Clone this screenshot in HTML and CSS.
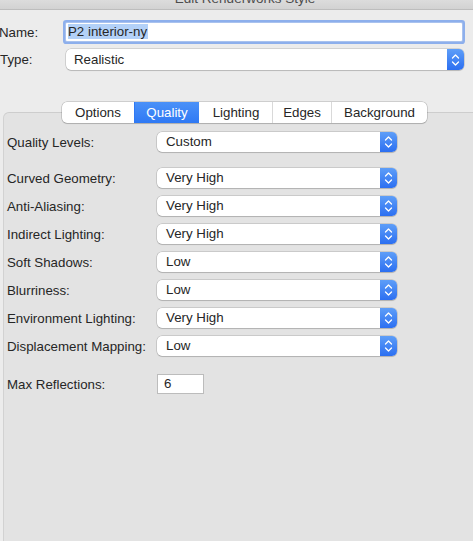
FILE: index.html
```html
<!DOCTYPE html>
<html>
<head>
<meta charset="utf-8">
<link rel="stylesheet" href="styles.css">
</head>
<body>
<div class="titlebar"><span>Edit Renderworks Style</span></div>
<div class="header">
  <label class="lbl name-lbl">Name:</label>
  <div class="textfield focused"><span class="sel">P2 interior-ny</span></div>
  <label class="lbl">Type:</label>
  <div class="popup wide"><span class="val">Realistic</span><span class="stepper"><svg width="17" height="20" viewBox="0 0 17 20"><path d="M5.5 8 L8.5 5 L11.5 8 M5.5 12 L8.5 15 L11.5 12" stroke="#fff" stroke-width="1.3" fill="none" stroke-linecap="round" stroke-linejoin="round"/></svg></span></div>
</div>
<div class="tabarea">
  <div class="tabs">
    <div class="tab t1">Options</div>
    <div class="tab t2 active">Quality</div>
    <div class="tab t3">Lighting</div>
    <div class="tab t4">Edges</div>
    <div class="tab t5">Background</div>
  </div>
  <div class="panel">
    <div class="row first"><span class="lbl">Quality Levels:</span><div class="popup"><span class="val">Custom</span><span class="stepper"><svg width="17" height="20" viewBox="0 0 17 20"><path d="M5.5 8 L8.5 5 L11.5 8 M5.5 12 L8.5 15 L11.5 12" stroke="#fff" stroke-width="1.3" fill="none" stroke-linecap="round" stroke-linejoin="round"/></svg></span></div></div>
    <div class="group">
      <div class="row"><span class="lbl">Curved Geometry:</span><div class="popup"><span class="val">Very High</span><span class="stepper"><svg width="17" height="20" viewBox="0 0 17 20"><path d="M5.5 8 L8.5 5 L11.5 8 M5.5 12 L8.5 15 L11.5 12" stroke="#fff" stroke-width="1.3" fill="none" stroke-linecap="round" stroke-linejoin="round"/></svg></span></div></div>
      <div class="row"><span class="lbl">Anti-Aliasing:</span><div class="popup"><span class="val">Very High</span><span class="stepper"><svg width="17" height="20" viewBox="0 0 17 20"><path d="M5.5 8 L8.5 5 L11.5 8 M5.5 12 L8.5 15 L11.5 12" stroke="#fff" stroke-width="1.3" fill="none" stroke-linecap="round" stroke-linejoin="round"/></svg></span></div></div>
      <div class="row"><span class="lbl">Indirect Lighting:</span><div class="popup"><span class="val">Very High</span><span class="stepper"><svg width="17" height="20" viewBox="0 0 17 20"><path d="M5.5 8 L8.5 5 L11.5 8 M5.5 12 L8.5 15 L11.5 12" stroke="#fff" stroke-width="1.3" fill="none" stroke-linecap="round" stroke-linejoin="round"/></svg></span></div></div>
      <div class="row"><span class="lbl">Soft Shadows:</span><div class="popup"><span class="val">Low</span><span class="stepper"><svg width="17" height="20" viewBox="0 0 17 20"><path d="M5.5 8 L8.5 5 L11.5 8 M5.5 12 L8.5 15 L11.5 12" stroke="#fff" stroke-width="1.3" fill="none" stroke-linecap="round" stroke-linejoin="round"/></svg></span></div></div>
      <div class="row"><span class="lbl">Blurriness:</span><div class="popup"><span class="val">Low</span><span class="stepper"><svg width="17" height="20" viewBox="0 0 17 20"><path d="M5.5 8 L8.5 5 L11.5 8 M5.5 12 L8.5 15 L11.5 12" stroke="#fff" stroke-width="1.3" fill="none" stroke-linecap="round" stroke-linejoin="round"/></svg></span></div></div>
      <div class="row"><span class="lbl">Environment Lighting:</span><div class="popup"><span class="val">Very High</span><span class="stepper"><svg width="17" height="20" viewBox="0 0 17 20"><path d="M5.5 8 L8.5 5 L11.5 8 M5.5 12 L8.5 15 L11.5 12" stroke="#fff" stroke-width="1.3" fill="none" stroke-linecap="round" stroke-linejoin="round"/></svg></span></div></div>
      <div class="row"><span class="lbl">Displacement Mapping:</span><div class="popup"><span class="val">Low</span><span class="stepper"><svg width="17" height="20" viewBox="0 0 17 20"><path d="M5.5 8 L8.5 5 L11.5 8 M5.5 12 L8.5 15 L11.5 12" stroke="#fff" stroke-width="1.3" fill="none" stroke-linecap="round" stroke-linejoin="round"/></svg></span></div></div>
    </div>
    <div class="row last"><span class="lbl">Max Reflections:</span><div class="numfield">6</div></div>
  </div>
</div>
</body>
</html>
```
FILE: styles.css
```css
* { box-sizing: border-box; }
html, body {
  margin: 0;
  padding: 0;
}
body {
  width: 473px;
  height: 541px;
  overflow: hidden;
  background: #ececec;
  font-family: "Liberation Sans", Arial, sans-serif;
  font-size: 13.3px;
  color: #262626;
  display: flex;
  flex-direction: column;
}
.titlebar {
  height: 10px;
  flex: none;
  background: linear-gradient(#dcdcdc, #d2d2d2);
  border-bottom: 1px solid #bdbdbd;
  overflow: hidden;
  text-align: center;
}
.titlebar span {
  display: block;
  line-height: 13px;
  margin-top: -8px;
  padding-left: 17px;
  color: #4d4d4d;
  font-size: 13.5px;
}
.header {
  display: grid;
  grid-template-columns: 66px 1fr;
  align-items: center;
  row-gap: 8px;
  padding: 13px 11px 0 0;
}
.lbl {
  white-space: nowrap;
}
.name-lbl {
  margin-left: -1px;
}
.textfield {
  height: 18px;
  background: #fff;
  padding: 1px 2px;
  line-height: 16px;
}
.textfield.focused {
  box-shadow: 0 0 0 1px #a9c2ee, 0 0 0 3px rgba(110, 155, 236, 0.75);
  border-radius: 1px;
}
.sel {
  background: #b3d1f8;
  display: inline-block;
  line-height: 15px;
  padding-right: 1px;
}
.popup {
  display: flex;
  align-items: stretch;
  height: 20px;
  width: 240px;
  background: #fff;
  border-radius: 5px;
  box-shadow: 0 0 0 0.5px rgba(0,0,0,0.22), 0 1px 1px rgba(0,0,0,0.12);
}
.popup.wide {
  width: auto;
  margin-right: -2px;
  height: 21px;
}
.val {
  flex: 1;
  padding-left: 9px;
  line-height: 20px;
}
.popup.wide .val { padding-left: 8px; line-height: 21px; }
.stepper {
  width: 17px;
  flex: none;
  display: flex;
  align-items: center;
  justify-content: center;
  border-radius: 0 5px 5px 0;
  background: linear-gradient(#5e9ef8, #2c6ff1);
}
.tabarea {
  flex: 1;
  display: flex;
  flex-direction: column;
  margin-top: 32px;
}
.tabs {
  position: relative;
  z-index: 1;
  display: flex;
  align-self: flex-start;
  margin-left: 62px;
  height: 21px;
  background: #fff;
  border-radius: 5px;
  box-shadow: 0 0 0 0.5px rgba(0,0,0,0.25), 0 1px 1px rgba(0,0,0,0.12);
  overflow: hidden;
}
.tab {
  text-align: center;
  line-height: 21px;
  border-left: 1px solid #d9d9d9;
}
.tab.t1 { width: 72px; border-left: none; }
.tab.t2 { width: 65px; }
.tab.t3 { width: 73px; }
.tab.t4 { width: 59px; }
.tab.t5 { width: 96px; }
.tab.active {
  background: linear-gradient(#4a91f8, #2f79f4);
  color: #fff;
  border-left-color: #2f79f4;
}
.tab.active + .tab { border-left-color: transparent; }
.panel {
  flex: 1;
  margin-top: -11px;
  margin-left: 3px;
  background: #e3e3e3;
  border-top: 1px solid #cdcdcd;
  border-left: 1px solid #d2d2d2;
  border-top-left-radius: 6px;
  padding: 19px 0 0 3px;
}
.row {
  display: grid;
  grid-template-columns: 150px auto;
  align-items: center;
  justify-content: start;
}
.group {
  display: flex;
  flex-direction: column;
  gap: 8px;
  margin-top: 16px;
}
.row.last {
  margin-top: 18px;
}
.numfield {
  width: 47px;
  height: 20px;
  background: #fff;
  border: 1px solid #bcbcbc;
  padding-left: 6px;
  line-height: 18px;
}
```
